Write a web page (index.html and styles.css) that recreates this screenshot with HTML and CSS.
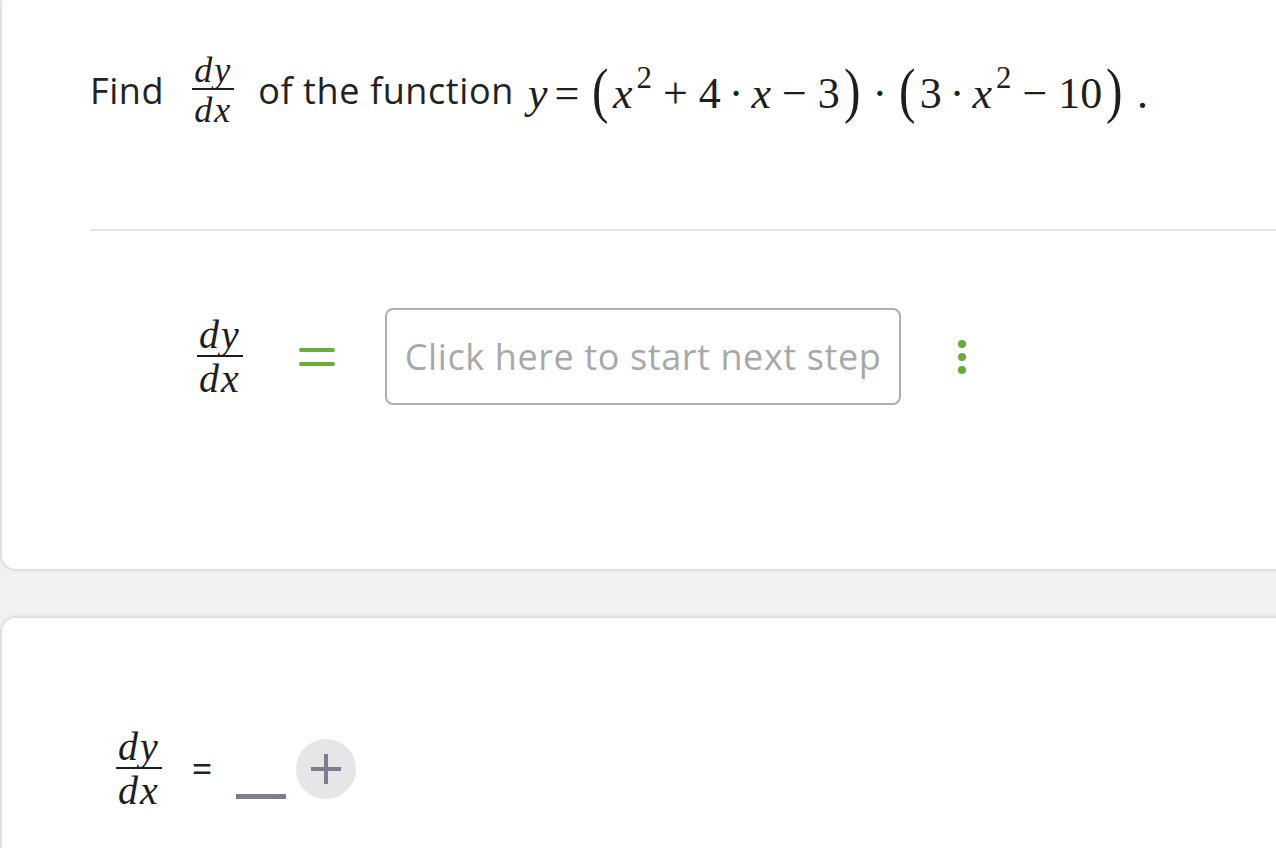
FILE: index.html
```html
<!DOCTYPE html>
<html>
<head>
<meta charset="utf-8">
<link rel="stylesheet" href="styles.css">
</head>
<body>
<div class="page">
  <section class="card card-top">
    <div class="problem">
      <span class="txt">Find</span>
      <span class="frac frac-sm"><span class="num">dy</span><span class="den">dx</span></span>
      <span class="txt">of the function</span>
      <span class="math">
        <span class="mi">y</span><span class="rel">=</span><span class="paren">(</span><span class="mi">x</span><sup class="sup">2</sup><span class="bin">+</span><span class="mn">4</span><span class="dot">·</span><span class="mi">x</span><span class="bin">−</span><span class="mn">3</span><span class="paren">)</span><span class="dot">·</span><span class="paren">(</span><span class="mn">3</span><span class="dot">·</span><span class="mi">x</span><sup class="sup">2</sup><span class="bin">−</span><span class="mn">10</span><span class="paren">)</span><span class="period">.</span>
      </span>
    </div>
    <div class="divider"></div>
    <div class="step-row">
      <span class="frac frac-lg"><span class="num">dy</span><span class="den">dx</span></span>
      <span class="green-eq"><span class="bar"></span><span class="bar"></span></span>
      <div class="step-input">Click here to start next step</div>
      <span class="kebab"><span></span><span></span><span></span></span>
    </div>
  </section>
  <section class="card card-bottom">
    <div class="answer-row">
      <span class="frac frac-lg"><span class="num">dy</span><span class="den">dx</span></span>
      <span class="plain-eq">=</span>
      <span class="blank"></span>
      <span class="add-btn"><svg width="32" height="32" viewBox="0 0 32 32"><path d="M16 1v30M1 16h30" stroke="#7b7e8c" stroke-width="4" fill="none"/></svg></span>
    </div>
  </section>
</div>
</body>
</html>
```

FILE: styles.css
```css
html, body {
  margin: 0;
  padding: 0;
  background: #f2f2f2;
  overflow: hidden;
}
body {
  width: 1276px;
  height: 848px;
  font-family: "Open Sans", "Noto Sans", sans-serif;
  color: #222;
}
.page {
  display: flex;
  flex-direction: column;
  gap: 49px;
}
.card {
  background: #fff;
  margin-left: 2px;
  margin-right: -30px;
  box-shadow: 0 0 5px rgba(0, 0, 0, 0.22);
}
.card-top {
  border-radius: 0 0 14px 14px;
  height: 569px;
  box-sizing: border-box;
}
.card-bottom {
  border-radius: 14px 14px 0 0;
  height: 260px;
  padding-top: 121px;
  box-sizing: border-box;
}
.problem {
  height: 178px;
  display: flex;
  align-items: center;
  padding-left: 88px;
}
.txt {
  font-size: 36px;
  letter-spacing: 0.6px;
  line-height: 1;
  position: relative;
  top: 2px;
}
.frac {
  display: inline-flex;
  flex-direction: column;
  align-items: center;
  font-family: "Liberation Serif", "Times New Roman", serif;
  font-style: italic;
  color: #1e1e1e;
}
.frac .num {
  border-bottom: 2px solid #1e1e1e;
  padding: 0 2px;
  line-height: 1;
}
.frac .den {
  line-height: 1;
  padding-top: 2px;
}
.frac-sm {
  font-size: 36px;
  letter-spacing: 2px;
  margin: 0 24px 0 28px;
  position: relative;
  top: 1px;
}
.frac-lg {
  font-size: 40px;
  letter-spacing: 2px;
}
.math {
  display: inline-flex;
  align-items: baseline;
  font-family: "Liberation Serif", "Times New Roman", serif;
  font-size: 44px;
  color: #1e1e1e;
  margin-left: 14px;
  position: relative;
  top: 4px;
}
.mi { font-style: italic; }
.rel { padding: 0 9px 0 7px; }
.bin { padding: 0 11px; }
.dot { padding: 0 8px; }
.sup {
  font-size: 31px;
  position: relative;
  top: -20px;
  vertical-align: baseline;
  line-height: 0;
  margin-left: 4px;
}
.paren {
  display: inline-block;
  font-size: 62px;
  transform: scaleX(0.8);
  position: relative;
  top: 3px;
  line-height: 0;
  padding: 0 2px;
}
.period { padding-left: 10px; }
.divider {
  height: 2px;
  background: #e3e3e3;
  margin-left: 88px;
  margin-top: 51px;
}
.step-row {
  display: flex;
  align-items: center;
  margin-top: 77px;
  padding-left: 195px;
  height: 97px;
}
.green-eq {
  display: inline-flex;
  flex-direction: column;
  gap: 10px;
  margin-left: 56px;
  margin-right: 50px;
}
.green-eq .bar {
  display: block;
  width: 36px;
  height: 4px;
  border-radius: 2px;
  background: #67ad3a;
}
.step-input {
  width: 516px;
  height: 97px;
  box-sizing: border-box;
  border: 2px solid #b0b0b0;
  border-radius: 8px;
  display: flex;
  align-items: center;
  padding-left: 18px;
  font-size: 36px;
  letter-spacing: 0.6px;
  color: #a8a8a8;
}
.kebab {
  display: inline-flex;
  flex-direction: column;
  gap: 5px;
  margin-left: 57px;
}
.kebab span {
  width: 8px;
  height: 8px;
  border-radius: 50%;
  background: #67ad3a;
}
.answer-row {
  display: flex;
  align-items: center;
  height: 60px;
  padding-left: 114px;
}
.plain-eq {
  font-size: 36px;
  color: #222;
  margin-left: 30px;
  line-height: 1;
}
.blank {
  width: 50px;
  height: 5px;
  background: #7b7e8c;
  align-self: flex-end;
  margin-left: 24px;
}
.add-btn {
  width: 60px;
  height: 60px;
  border-radius: 50%;
  background: #e6e6e8;
  display: inline-flex;
  align-items: center;
  justify-content: center;
  margin-left: 10px;
}
```
